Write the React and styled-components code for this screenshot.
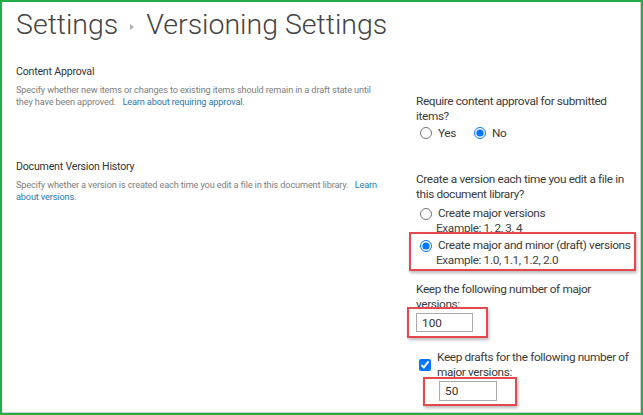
import React from "react";
import styled, { createGlobalStyle } from "styled-components";

const Global = createGlobalStyle`
  html, body { margin: 0; padding: 0; background: #fff; }
  body { font-family: Roboto, "Open Sans", sans-serif; }
`;

const Frame = styled.div`
  box-sizing: border-box;
  width: 643px;
  height: 415px;
  border: 2px solid #22ad46;
  box-shadow: inset -1px -1px 0 #cfcfcf;
  padding: 5px 9px 0 14px;
  overflow: hidden;
  background: #fff;
`;

const Title = styled.h1`
  margin: 0;
  font-family: Roboto, "Open Sans", sans-serif;
  font-weight: 300;
  font-size: 28.5px;
  line-height: 36px;
  color: #444;
  white-space: nowrap;
  display: flex;
  align-items: center;
`;

const Sep = styled.span`
  display: inline-block;
  width: 0;
  height: 0;
  margin: 3px 12px 0;
  border-top: 3.5px solid transparent;
  border-bottom: 3.5px solid transparent;
  border-left: 4px solid #b0b0b0;
`;

const Section = styled.section`
  display: grid;
  grid-template-columns: 400px 216px;
  margin-top: ${(p) => p.$gap}px;
`;

const Info = styled.div`
  display: flex;
  flex-direction: column;
`;

const SectionHeading = styled.h2`
  margin: 0;
  font-weight: 400;
  font-size: 10.6px;
  letter-spacing: -0.2px;
  line-height: 15px;
  color: #333;
  white-space: nowrap;
`;

const Desc = styled.p`
  margin: 5px 0 0;
  font-size: 9.2px;
  letter-spacing: -0.15px;
  line-height: 12px;
  color: #808080;
  white-space: nowrap;
`;

const Link = styled.a`
  color: #2a7ab0;
  text-decoration: none;
`;

const Controls = styled.div`
  padding-top: ${(p) => p.$top}px;
  display: flex;
  flex-direction: column;
  align-items: flex-start;
  font-size: 11.8px;
  letter-spacing: -0.36px;
  line-height: 15px;
  color: #3a3a3a;
`;

const Prompt = styled.div`
  white-space: nowrap;
  margin-top: ${(p) => p.$mt || 0}px;
`;

const RadioGroup = styled.div`
  display: flex;
  align-items: center;
  margin-top: 1px;
  height: 16px;
  padding-left: 4px;
`;

const RadioLabel = styled.label`
  display: flex;
  align-items: center;
  gap: 6px;
  margin-right: 18px;
  white-space: nowrap;
`;

const Radio = styled.input.attrs({ type: "radio" })`
  width: 12px;
  height: 12px;
  margin: 0;
  flex: none;
  accent-color: #0075ff;
`;

const Option = styled.div`
  display: flex;
  flex-direction: column;
  margin-top: ${(p) => p.$mt || 0}px;
  padding-left: 4px;
  align-self: stretch;
`;

const OptionLine = styled.label`
  display: flex;
  align-items: center;
  gap: 6px;
  height: 15px;
  white-space: nowrap;
`;

const Example = styled.div`
  padding-left: 16px;
  color: #444;
  white-space: nowrap;
`;

const Highlight = styled.div`
  position: relative;
  align-self: ${(p) => (p.$stretch ? "stretch" : "flex-start")};
  margin-top: ${(p) => p.$mt || 0}px;
  margin-left: ${(p) => p.$ml || 0}px;
  &::after {
    content: "";
    position: absolute;
    top: ${(p) => p.$t}px;
    left: ${(p) => p.$l}px;
    right: ${(p) => p.$r}px;
    bottom: ${(p) => p.$b}px;
    border: 2px solid #e5484d;
    box-shadow: 1px 2px 3px rgba(0, 0, 0, 0.28);
    pointer-events: none;
  }
`;

const NumberBox = styled.input`
  box-sizing: border-box;
  display: block;
  width: ${(p) => p.$w}px;
  height: ${(p) => p.$h}px;
  margin: 0;
  padding: 0 0 0 5px;
  border: 1px solid #ababab;
  border-radius: 0;
  font-family: inherit;
  font-size: 11.8px;
  color: #333;
  background: #fff;
  outline: none;
`;

const CheckRow = styled.label`
  display: flex;
  align-items: center;
  gap: 6px;
  margin-top: 18px;
  padding-left: 3px;
`;

const Check = styled.input.attrs({ type: "checkbox" })`
  width: 12px;
  height: 12px;
  margin: 0;
  flex: none;
  accent-color: #0075ff;
`;

const CheckText = styled.span`
  white-space: nowrap;
`;

export default function App() {
  return (
    <>
      <Global />
      <Frame>
        <Title>
          Settings
          <Sep />
          Versioning Settings
        </Title>

        <Section $gap={21}>
          <Info>
            <SectionHeading>Content Approval</SectionHeading>
            <Desc>
              Specify whether new items or changes to existing items should remain in a draft state until
              <br />
              they have been approved.&nbsp;&nbsp;&nbsp;<Link href="#">Learn about requiring approval.</Link>
            </Desc>
          </Info>
          <Controls $top={30}>
            <Prompt>
              Require content approval for submitted
              <br />
              items?
            </Prompt>
            <RadioGroup>
              <RadioLabel>
                <Radio name="approval" readOnly />
                Yes
              </RadioLabel>
              <RadioLabel>
                <Radio name="approval" defaultChecked />
                No
              </RadioLabel>
            </RadioGroup>
          </Controls>
        </Section>

        <Section $gap={18}>
          <Info>
            <SectionHeading>Document Version History</SectionHeading>
            <Desc>
              Specify whether a version is created each time you edit a file in this document library.&nbsp;&nbsp;&nbsp;<Link href="#">Learn</Link>
              <br />
              <Link href="#">about versions.</Link>
            </Desc>
          </Info>
          <Controls $top={13}>
            <Prompt>
              Create a version each time you edit a file in
              <br />
              this document library?
            </Prompt>
            <Option $mt={4}>
              <OptionLine>
                <Radio name="versions" />
                Create major versions
              </OptionLine>
              <Example>Example: 1, 2, 3, 4</Example>
            </Option>
            <Highlight $stretch $mt={2} $t={-6} $l={-7} $r={-4} $b={-3}>
              <Option>
                <OptionLine>
                  <Radio name="versions" defaultChecked />
                  Create major and minor (draft) versions
                </OptionLine>
                <Example>Example: 1.0, 1.1, 1.2, 2.0</Example>
              </Option>
            </Highlight>
            <Prompt $mt={14}>
              Keep the following number of major
              <br />
              versions:
            </Prompt>
            <Highlight $mt={1} $t={-6} $l={-9} $r={-15} $b={-6}>
              <NumberBox $w={57} $h={19} value="100" readOnly />
            </Highlight>
            <CheckRow>
              <Check defaultChecked />
              <CheckText>
                Keep drafts for the following number of
                <br />
                major versions:
              </CheckText>
            </CheckRow>
            <Highlight $mt={1} $ml={23} $t={-4} $l={-16} $r={-20} $b={-5}>
              <NumberBox $w={58} $h={20} value="50" readOnly />
            </Highlight>
          </Controls>
        </Section>
      </Frame>
    </>
  );
}
